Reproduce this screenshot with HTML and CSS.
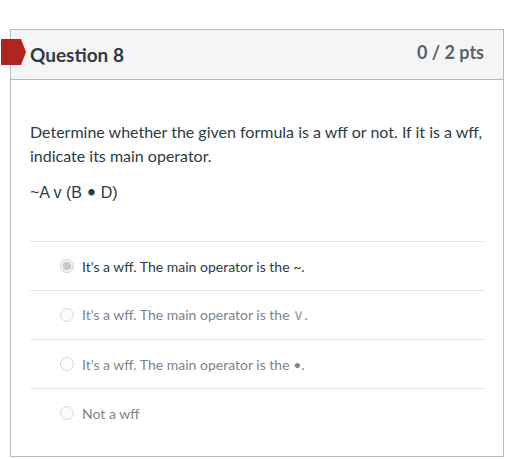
FILE: index.html
```html
<!DOCTYPE html>
<html>
<head>
<meta charset="utf-8">
<link rel="stylesheet" href="styles.css">
</head>
<body>
<div class="page">
  <div class="card">
    <div class="flag"></div>
    <div class="header">
      <h2 class="title">Question 8</h2>
      <span class="pts">0 / 2 pts</span>
    </div>
    <div class="body">
      <p class="prompt">Determine whether the given formula is a wff or not. If it is a wff, indicate its main operator.</p>
      <p class="formula">~A v (B <span class="dot">&bull;</span> D)</p>
      <div class="answers">
        <div class="answer selected"><span class="radio"></span><span class="label">It's a wff. The main operator is the ~.</span></div>
        <div class="answer"><span class="radio"></span><span class="label">It's a wff. The main operator is the <span class="or">&or;</span>.</span></div>
        <div class="answer"><span class="radio"></span><span class="label">It's a wff. The main operator is the &bull;.</span></div>
        <div class="answer last"><span class="radio"></span><span class="label">Not a wff</span></div>
      </div>
    </div>
  </div>
</div>
</body>
</html>
```
FILE: styles.css
```css
* { box-sizing: border-box; }
html, body { margin: 0; padding: 0; background: #fff; }
body { font-family: Lato, "Open Sans", sans-serif; color: #2d3b45; }
.page { padding: 29px 9px 0 10px; }
.card {
  position: relative;
  width: 494px;
  border: 1px solid #b4b9bd;
}
.flag {
  position: absolute;
  left: -10px;
  top: 9px;
  width: 25px;
  height: 26px;
  background: #b0241f;
  clip-path: polygon(0 0, 20px 0, 25px 13px, 20px 26px, 0 26px);
}
.header {
  height: 50px;
  background: #f5f5f5;
  border-bottom: 1px solid #b4b9bd;
  display: flex;
  align-items: center;
  justify-content: space-between;
  padding: 0 19px 0 19px;
}
.title { margin: 0; font-size: 19px; font-weight: 700; color: #2d3b45; }
.pts { font-size: 18px; font-weight: 700; color: #59636a; position: relative; top: -3px; }
.body { padding: 40px 19px 19px 19px; }
.prompt { margin: 0; font-size: 16px; line-height: 24px; }
.formula { margin: 12px 0 0 0; font-family: "Liberation Sans", Arial, sans-serif; font-size: 16px; line-height: 24px; }
.formula .dot { font-family: Lato, sans-serif; font-size: 17px; }
.answers { margin-top: 36px; }
.answer {
  height: 49px;
  border-top: 1px solid #e2e5e7;
  display: flex;
  align-items: center;
  padding-left: 30px;
}
.answer .radio {
  width: 14px;
  height: 14px;
  border-radius: 50%;
  border: 1px solid #d4d8db;
  background: #fcfcfc;
  margin-right: 8px;
  flex: none;
}
.answer.selected .radio {
  border-color: #cfd3d6;
  background: radial-gradient(circle, #c4c8cb 0 4px, #f2f3f4 4.5px);
}
.label { font-size: 14px; color: #7b858c; }
.answer.selected .label { color: #2d3b45; }
.or { font-family: "DejaVu Sans", sans-serif; font-weight: 300; font-size: 15px; color: #9aa2a8; }
```
